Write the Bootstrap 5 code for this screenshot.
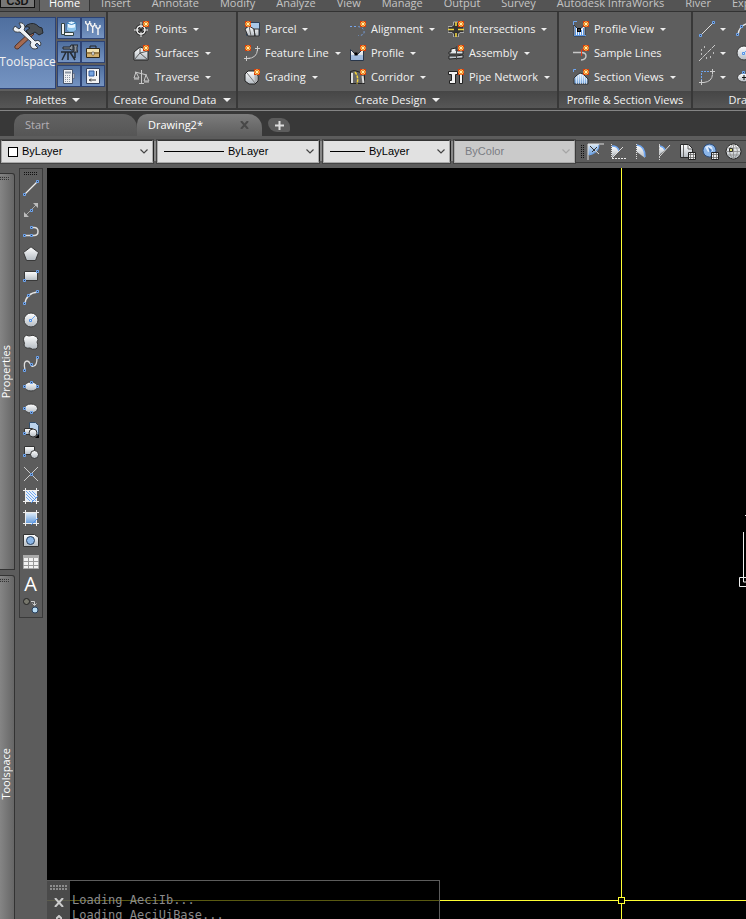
<!DOCTYPE html>
<html lang="en">
<head>
<meta charset="utf-8">
<meta name="viewport" content="width=device-width, initial-scale=1">
<title>Drawing2</title>
<link href="https://cdn.jsdelivr.net/npm/bootstrap@5.3.0/dist/css/bootstrap.min.css" rel="stylesheet">
<style>
:root{--bg:#5c5c5c;--edge:#383838}
body{font-family:"Open Sans","Noto Sans",sans-serif;font-size:11px;line-height:18px;background:var(--bg);color:#f2f2f2}
button{font:inherit;color:inherit;border:0;background:none;padding:0}
svg{display:block;flex:none}
.menu-tabs{height:12px;flex:none;background:#545454;border-bottom:1px solid #333;color:#c4c4c4}
.menu-tabs a{color:inherit;text-decoration:none;white-space:nowrap;flex:none;line-height:16px}
.menu-tabs a.current{color:#fff;background:#666;border:1px solid #333;border-width:0 1px;padding:0 9px;margin-left:4px}
.menu-tabs .names{gap:21px;padding-left:11px}
.app-btn{width:35px;flex:none;height:18px;margin-bottom:3px;background:#777;border:1px solid #111;color:#111;font:bold 11px/20px "Liberation Sans",sans-serif}
.ribbon{height:98px;flex:none;background:var(--edge);gap:2px;padding-bottom:2px}
.panel{background:#5e5e5e;flex:none;overflow:hidden}
.panel-body{height:79px;padding-top:5px}
.panel-title{height:17px;background:linear-gradient(#464646,#565656);white-space:nowrap;display:flex;align-items:center;justify-content:center;gap:6px}
.w-palettes{width:106px}.w-ground{width:128px}.w-design{width:319px}.w-section{width:132px}.w-draw{width:112px}
.cmd{height:24px;display:flex;align-items:center;gap:5px;white-space:nowrap}
.cmd .arrow{margin-left:1px}
.arrow{display:inline-block;border:3px solid transparent;border-top-color:#eee;border-bottom:0}
.arrow.big{border-width:4px 4px 0}
.design-cols{display:grid;grid-template-columns:106px 98px 1fr;padding-left:6px}
.section-items{padding-left:14px}
.ground-items{padding-left:24px}
.draw-grid{display:grid;grid-template-columns:37px 1fr;grid-auto-rows:24px;padding-left:6px}
.draw-grid .cmd{gap:4px}
.blue-btn{background:linear-gradient(#4f6f9f,#7594c2);border:1px solid #2d4374;display:flex;align-items:center;justify-content:center}
.blue-main{width:56px;height:72px;flex-direction:column;border-left:0;justify-content:flex-start;padding-top:4px;gap:3px}
.blue-main span{font-size:12px}
.blue-grid{display:grid;grid-template-columns:24px 24px;grid-auto-rows:22px;row-gap:2px;padding-left:1px}
.file-tabs{height:26px;flex:none;background:var(--edge);border-top:1px solid #848484;padding:3px 0 0 14px}
.file-tab{height:22px;line-height:22px;border-radius:10px 14px 0 0;background:linear-gradient(#626262,#565656);color:#b4b0b6;padding:0 11px;flex:none}
.file-tab.start{width:123px}
.file-tab.current{width:125px;padding-right:13px;color:#fff;background:linear-gradient(#7c7c7c,#5e5e5e)}
.add-tab{width:22px;height:14px;margin:4px 0 0 6px;background:#5c5c5c;border-radius:5px 9px 2px 9px;display:flex;align-items:center;justify-content:center}
.props{height:32px;flex:none;padding:4px 0 5px 1px}
.combo{height:23px;background:#e1e1e1;border:1px solid #aaa;border-top-color:#333;outline:1px solid #444;display:flex;align-items:center;flex:none;padding:0 4px 0 6px;color:#000}
.combo select{flex:1;min-width:0;height:19px;border:0;background:transparent;appearance:none;color:inherit;font:11px/19px "Liberation Sans",sans-serif;padding:0 0 0 4px}
.combo svg{color:#444}
.combo select:disabled{opacity:1;color:#7a7d84}
.combo.off{background:#cacaca}
.combo.off svg{color:#a5a5a5}
.c1{width:152px}.c2{width:162px}.c3{width:127px}.c4{width:121px}
.split-bar{width:4px;height:20px;border:1px solid #222;border-width:0 1px;background:#888;margin-top:1px;flex:none}
.swatch-box{width:10px;height:10px;border:1px solid #000;background:#fff}
.line-sample{height:1px;background:#000;width:60px}
.c3 .line-sample{width:35px}
.icon-bar{height:23px;flex:1 0 168px;border:1px solid #3c3c3c;border-right:0;padding-left:4px;overflow:hidden}
.icon-bar button{width:23px;height:20px;flex:none;display:flex;align-items:center;justify-content:center}
.palettes{width:15px;flex:none;padding-top:5px;gap:5px}
.dock{height:397px;flex:none;background:linear-gradient(90deg,#858585,#666);border:1px solid #333;border-left:0;border-radius:0 3px 0 0;position:relative;display:flex;align-items:center;justify-content:center}
.dock span{writing-mode:vertical-rl;transform:rotate(180deg);line-height:12px;color:#fff;margin-right:3px}
.grip{position:absolute;top:2px;left:0;width:10px;height:4px;background:repeating-linear-gradient(#777 0 1px,transparent 1px 2px),repeating-linear-gradient(90deg,#333 0 1px,#777 1px 2px)}
.toolcol{width:24px;flex:none;border:1px solid #3a3a3a;align-self:flex-start;margin:0 4px}
.toolcol button{width:21px;height:22px;display:flex;align-items:center;justify-content:center}
.toolcol .letter{font-size:20px;line-height:22px;color:#fff}
.toolgrip{height:8px;padding:2px 4px}
.toolgrip i{display:block;height:4px;background:repeating-linear-gradient(var(--bg) 0 1px,transparent 1px 2px),repeating-linear-gradient(90deg,#111 0 1px,var(--bg) 1px 2px)}
.bargrip{width:4px;height:14px;flex:none;background:repeating-linear-gradient(90deg,var(--bg) 0 1px,transparent 1px 2px),repeating-linear-gradient(#111 0 1px,var(--bg) 1px 2px)}
.canvas{background:#000;position:relative;overflow:hidden}
.vline{position:absolute;left:574px;top:0;bottom:0;width:1px;background:#ff3}
.hline{position:absolute;left:0;right:0;bottom:18px;height:1px;background:#ff3}
.node-box{position:absolute;left:571px;bottom:15px;width:7px;height:7px;border:1px solid #ff3;background:#000}
.ucs{position:absolute;left:692px;top:346px}
.console{position:absolute;left:0;bottom:0;width:393px;height:39px;border:1px solid #5c5c5c;border-width:1px 1px 0 0;display:flex;overflow:hidden;background:rgba(0,0,0,.65);font:12px/15px "DejaVu Sans Mono",monospace;color:#8b8b8b}
.console-side{width:23px;flex:none;background:rgba(92,92,92,.8);padding-top:4px}
.console-text{padding:12px 0 0 2px;white-space:pre}
</style>
<script src="https://cdn.jsdelivr.net/npm/bootstrap@5.3.0/dist/js/bootstrap.bundle.min.js"></script>
</head>
<body class="vh-100 d-flex flex-column overflow-hidden">
<svg width="0" height="0" class="position-absolute" aria-hidden="true">
<defs>
<linearGradient id="w" x1="0" y1="0" x2="0" y2="1"><stop offset="0" stop-color="#fff"/><stop offset="1" stop-color="#b4bbc2"/></linearGradient>
<linearGradient id="b" x1="0" y1="0" x2="0" y2="1"><stop offset="0" stop-color="#dbeaf8"/><stop offset="1" stop-color="#6b9fdc"/></linearGradient>
<symbol id="spark" viewBox="0 0 6 6"><path d="M0 0h6v6H0z" fill="#d93a0b"/><path d="M3 0v6M0 3h6M1 1l4 4M5 1L1 5" stroke="#ffd65b"/><path d="M2 2h2v2H2z" fill="#fff2b0"/></symbol>
<symbol id="nd" viewBox="0 0 3 3"><path d="M.5.5h2v2h-2z" fill="#34414f" stroke="#6ea6f2"/></symbol>
<symbol id="chev" viewBox="0 0 8 5"><path d="M.5.5L4 4 7.5.5" fill="none" stroke="currentColor" stroke-width="1.2"/></symbol>
<symbol id="profile" viewBox="0 0 16 16"><path d="M.5 4.500l5 5h2l4-4h2v10H.5z" fill="url(#w)" stroke="#28364a"/><path d="M1 10v5h12v-5z" fill="#8fb4e2" opacity=".7"/><path d="M4.500 7.500h3v3h-3z" fill="#000"/><use href="#spark" x="10" width="6" height="6"/></symbol>
<symbol id="profview" viewBox="0 0 16 16"><path d="M.5 4V.5H4" fill="none" stroke="#6ea6f2"/><path d="M1 4l4 4h2l5-4v11H1z" fill="#f2f6fa" stroke="#28364a"/><path d="M2.500 6v9M4.500 9v6M6.500 11v4M8.500 9v6M10.500 7v8" stroke="#5c97e2"/><path d="M1 14.500h12" stroke="#5c97e2"/><path d="M4 7h4v4H4z" fill="#000"/><path d="M5.500 8.500h1v1h-1z" fill="#fff"/><use href="#spark" x="10" width="6" height="6"/></symbol>
<symbol id="arcs" viewBox="0 0 16 16"><path d="M2 14Q3 3 15 2" fill="none" stroke="#e6e6e6" stroke-width="1.400"/><use href="#nd" x="0" y="12" width="3" height="3"/><use href="#nd" x="4" y="4" width="3" height="3"/><use href="#nd" x="13" y="0" width="3" height="3"/></symbol>
<symbol id="circ" viewBox="0 0 16 16"><circle cx="8" cy="8" r="7" fill="url(#w)" stroke="#3c3c3c"/><path d="M8 8l4-4" stroke="#6ea6f2"/><path d="M6.500 7.500h2v2h-2z" fill="#dbeaf8" stroke="#4f90e8"/></symbol>
<symbol id="ell" viewBox="0 0 16 16"><ellipse cx="8" cy="8.500" rx="6.500" ry="4.500" fill="url(#w)" stroke="#3c3c3c"/></symbol>
<symbol id="grid" viewBox="0 0 8 8"><path d="M.5.5h7v7h-7z" fill="#eee" stroke="#222"/><path d="M2.500 1v6M5.500 1v6M1 2.500h6M1 5.500h6" stroke="#666" stroke-width=".8"/></symbol>
</defs></svg>

<nav class="menu-tabs d-flex align-items-end overflow-hidden" aria-label="Ribbon tabs">
  <button class="app-btn">C3D</button>
  <a class="current" href="#">Home</a>
  <div class="names d-flex">
    <a href="#">Insert</a><a href="#">Annotate</a><a href="#">Modify</a><a href="#">Analyze</a><a href="#">View</a><a href="#">Manage</a><a href="#">Output</a><a href="#">Survey</a><a href="#">Autodesk InfraWorks</a><a href="#">River</a><a href="#">Express Tools</a>
  </div>
</nav>

<div class="ribbon d-flex overflow-hidden">
  <section class="panel w-palettes">
    <div class="panel-body d-flex">
      <button class="blue-btn blue-main">
        <svg width="32" height="28" viewBox="0 0 32 28"><path d="M3 24L19 9l3 3L6 27q-4 0-3-3z" fill="#a46a51" stroke="#513127"/><path d="M15 3q7-4 12 2l3 1 1 5-4 2-4-3-5 3-4-4 4-3q-2-2-5-1z" fill="#4a5056" stroke="#24282d"/><path d="M3 4l4 3 2-2-2-4q5-1 6 4l-1 3 11 11q5-2 6 3l-1 2-3-3-2 2 3 3q-6 3-8-3l1-3L8 10q-6 1-7-3z" fill="#eef1f4" stroke="#30343a" stroke-width=".9"/></svg>
        <span>Toolspace</span>
      </button>
      <div class="blue-grid">
        <button class="blue-btn" aria-label="Panorama"><svg width="16" height="16" viewBox="0 0 16 16"><path d="M.5 3.500h3v11h-3zM3.500 12.500h9v3h-9z" fill="#f5f5f5" stroke="#344"/><path d="M6 3q4.500-4 9 0v7q-4.500 3-9 0z" fill="#e4f4ff" stroke="#3874aa"/><path d="M6 7v3q4.500 3 9 0V7q-4.500 2-9 0z" fill="#8cc4ec"/><path d="M6 3q4.500 3 9 0" fill="none" stroke="#3882c0"/></svg></button>
        <button class="blue-btn" aria-label="Tool palettes"><svg width="16" height="16" viewBox="0 0 16 16"><path d="M.7 1v2l2 2 2-2V1M2.700 5v6M5.700 3v2l2 2 2-2V3M7.700 7v6M11 5v2l2 2 2-2V5M13 9v6" fill="none" stroke="#f2f2f2" stroke-width="1.500"/></svg></button>
        <button class="blue-btn" aria-label="Survey"><svg width="17" height="17" viewBox="0 0 17 17"><path d="M2 3h7l1-2h2v5h-2l-1-1H2zM12 1h5l-1 2v4h1v1h-5V7h1V3z" fill="#8a929a" stroke="#20252b"/><path d="M0 8h12M5 8L1 16M7 8v8M9 8l5 8M14 8v6" stroke="#252b33" stroke-width="1.500"/></svg></button>
        <button class="blue-btn" aria-label="Toolbox"><svg width="16" height="14" viewBox="0 0 16 14"><path d="M5 3V1h6v2" fill="none" stroke="#222"/><path d="M1.500 3.500h13v9h-13z" fill="#d1b06e" stroke="#302819"/><path d="M2 4h12v3H2z" fill="#f2e2b1"/><path d="M1 8h14" stroke="#675029"/><path d="M7 7h2v3H7z" fill="#fff" stroke="#333" stroke-width=".5"/></svg></button>
        <button class="blue-btn" aria-label="Calculator"><svg width="12" height="17" viewBox="0 0 12 17"><path d="M.5 1.500h9v14h-9z" fill="#eef0f2" stroke="#46536a"/><path d="M2 4.500h6" stroke="#8b96a4" stroke-width="2"/><path d="M2 7.500h6M2 9.500h6M2 11.500h6M2 13.500h6" stroke="#8b96a4" stroke-dasharray="1 1"/><path d="M10 5.500h1.500v5H10z" fill="#edf0f3" stroke="#46536a" stroke-width=".6"/></svg></button>
        <button class="blue-btn" aria-label="Properties"><svg width="14" height="16" viewBox="0 0 14 16"><path d="M.5.500h13v15H.5z" fill="#f4f4f4" stroke="#33405c"/><path d="M3 3h5v5H3z" fill="#76a5e1" stroke="#335a9c"/><path d="M10.500 3v5" stroke="#333"/><path d="M3 12h7M5 10.500L3.500 12 5 13.500" fill="none" stroke="#333"/></svg></button>
      </div>
    </div>
    <div class="panel-title">Palettes <i class="arrow big"></i></div>
  </section>

  <section class="panel w-ground">
    <div class="panel-body ground-items">
      <button class="cmd"><svg width="18" height="16" viewBox="0 0 18 16"><circle cx="9" cy="9" r="4" fill="none" stroke="#222" stroke-width="3.400"/><path d="M9 1v6M9 11v5M2 9h5M11 9h5" stroke="#eee"/><circle cx="9" cy="9" r="4" fill="none" stroke="#eee" stroke-width="1.600"/><circle cx="9" cy="9" r="1.500" fill="#222"/><use href="#spark" x="11" width="6" height="6"/></svg>Points <i class="arrow"></i></button>
      <button class="cmd"><svg width="18" height="16" viewBox="0 0 18 16"><path d="M2 7l6-5 8 3v10H2z" fill="url(#w)" stroke="#222"/><path d="M2 15l6-7 8 7M8 2v6l8-2" fill="none" stroke="#555"/><use href="#spark" x="11" width="6" height="6"/></svg>Surfaces <i class="arrow"></i></button>
      <button class="cmd"><svg width="18" height="16" viewBox="0 0 18 16"><path d="M9.500 1v13M7 14.500h5M3 3l12 3M4 3L2 9h5L4 3M14 6l-2 6h5l-3-6M2 10h5M12 13h5" fill="none" stroke="#c9c9c9"/></svg>Traverse <i class="arrow"></i></button>
    </div>
    <div class="panel-title">Create Ground Data <i class="arrow big"></i></div>
  </section>

  <section class="panel w-design">
    <div class="panel-body design-cols">
      <div>
        <button class="cmd"><svg width="16" height="16" viewBox="0 0 16 16"><path d="M5.500 1.500h10v13h-13v-9z" fill="#a9c8e8" stroke="#2d4058"/><path d="M1 8l4-3 5 3 1 7H4zM10 8h5v7h-4z" fill="url(#w)" stroke="#333"/><path d="M5 5l2 10" stroke="#666"/><use href="#spark" x="1" width="6" height="6"/></svg>Parcel <i class="arrow"></i></button>
        <button class="cmd"><svg width="16" height="16" viewBox="0 0 16 16"><path d="M0 13.500h6M2.500 11v5M11 3.500h5M13.500 1v5M3 13.500q10 0 10.500-9" fill="none" stroke="#ccc"/><use href="#spark" x="1" width="6" height="6"/></svg>Feature Line <i class="arrow"></i></button>
        <button class="cmd"><svg width="16" height="16" viewBox="0 0 16 16"><path d="M1 5l3-3h6l4 5v5l-3 3H5l-4-3z" fill="url(#w)" stroke="#222"/><path d="M3 4l8 10" stroke="#777"/><path d="M11 14l3-3V7l-4-4z" fill="#999" opacity=".6"/><use href="#spark" x="10" width="6" height="6"/></svg>Grading <i class="arrow"></i></button>
      </div>
      <div>
        <button class="cmd"><svg width="16" height="16" viewBox="0 0 16 16"><path d="M0 5.500h6q7 0 8 4.500t-6 4.500" fill="none" stroke="#77a6ed" stroke-dasharray="2 2"/><use href="#spark" x="10" width="6" height="6"/></svg>Alignment <i class="arrow"></i></button>
        <button class="cmd"><svg width="16" height="16"><use href="#profile"/></svg>Profile <i class="arrow"></i></button>
        <button class="cmd"><svg width="16" height="16" viewBox="0 0 16 16"><path d="M.5 2.500l4-1q6 1 10 5v8H.5z" fill="#666" stroke="#222"/><path d="M2 4v10M12.500 7l1 7" stroke="#ddd" stroke-width="2"/><path d="M5 3q4 5 2 12" fill="none" stroke="#f3d238" stroke-width="1.500" stroke-dasharray="3 1"/><use href="#spark" x="10" width="6" height="6"/></svg>Corridor <i class="arrow"></i></button>
      </div>
      <div>
        <button class="cmd"><svg width="16" height="16" viewBox="0 0 16 16"><path d="M5.500 1v3l-1.500 1.500H0v6h4L5.500 13v3h5v-3l1.500-1.500h4v-6h-4L10.500 4V1z" fill="#333" stroke="#aaa"/><path d="M0 8.500h6M10 8.500h6M8 1v4M8 12v4" stroke="#f0d541" stroke-width="1.600"/><use href="#spark" x="10" width="6" height="6"/></svg>Intersections <i class="arrow"></i></button>
        <button class="cmd"><svg width="16" height="16" viewBox="0 0 16 16"><path d="M3 4l5-1v3h7v3H1V7h2zM1 11h7l7-1v3l-14 1z" fill="url(#w)" stroke="#222"/><path d="M8.500 1v14" stroke="#444"/><use href="#spark" x="10" width="6" height="6"/></svg>Assembly <i class="arrow"></i></button>
        <button class="cmd"><svg width="16" height="16" viewBox="0 0 16 16"><path d="M.5 2.500h9v3h-2v9h-6v-3h2v-6h-3zM11.500 5.500h3v9h-3z" fill="#f2f2f2" stroke="#222"/><use href="#spark" x="10" width="6" height="6"/></svg>Pipe Network <i class="arrow"></i></button>
      </div>
    </div>
    <div class="panel-title">Create Design <i class="arrow big"></i></div>
  </section>

  <section class="panel w-section">
    <div class="panel-body section-items">
      <button class="cmd"><svg width="16" height="16"><use href="#profview"/></svg>Profile View <i class="arrow"></i></button>
      <button class="cmd"><svg width="16" height="16" viewBox="0 0 16 16"><path d="M0 7.500h8q5 0 5 3.500t-5 4" fill="none" stroke="#c7c7c7" stroke-width="1.400"/><path d="M8.500 11V5l2-2" fill="none" stroke="#e33c1a"/><use href="#spark" x="10" width="6" height="6"/></svg>Sample Lines</button>
      <button class="cmd"><svg width="16" height="16" viewBox="0 0 16 16"><path d="M.5 3V.5H3" fill="none" stroke="#6ea6f2"/><path d="M1 15V9l3-3 3-2 3 1 3 3 2 2v5z" fill="url(#b)" stroke="#333"/><path d="M3.500 8v7M5.500 6v9M7.500 5v10M9.500 6v9M11.500 7v8M13.500 9v6" stroke="#fff" opacity=".6"/><use href="#spark" x="10" width="6" height="6"/></svg>Section Views <i class="arrow"></i></button>
    </div>
    <div class="panel-title">Profile &amp; Section Views</div>
  </section>

  <section class="panel w-draw">
    <div class="panel-body draw-grid">
      <button class="cmd" aria-label="Line"><svg width="16" height="16" viewBox="0 0 16 16"><path d="M2 14L14 2" stroke="#ddd"/><use href="#nd" y="13" width="3" height="3"/><use href="#nd" x="13" width="3" height="3"/></svg><i class="arrow"></i></button>
      <button class="cmd" aria-label="Arc"><svg width="16" height="16"><use href="#arcs"/></svg></button>
      <button class="cmd" aria-label="Divide"><svg width="16" height="16" viewBox="0 0 16 16"><path d="M0 16L16 0" stroke="#ccc" stroke-dasharray="5 1"/><path d="M2 5h1M5 2h1M2 9h1M7 13h1M11 12h1M14 8h1" stroke="#ddd" stroke-width="1.500"/></svg><i class="arrow"></i></button>
      <button class="cmd" aria-label="Circle"><svg width="16" height="16"><use href="#circ"/></svg></button>
      <button class="cmd" aria-label="Curve"><svg width="16" height="16" viewBox="0 0 16 16"><path d="M2.500 12V2.500H11" fill="none" stroke="#6ea6f2" stroke-dasharray="2 1"/><path d="M0 13.500h5M2.500 11v5M11 2.500h5M13.500 0v5M5 13.500q8-1 8.500-8" fill="none" stroke="#ccc"/></svg><i class="arrow"></i></button>
      <button class="cmd" aria-label="Ellipse"><svg width="16" height="16" viewBox="0 0 16 16"><use href="#ell"/><path d="M6 8.500h4M8 6v5" stroke="#111"/><use href="#nd" x="6" y="2" width="3" height="3"/></svg></button>
    </div>
    <div class="panel-title">Draw <i class="arrow big"></i></div>
  </section>
</div>

<div class="file-tabs d-flex align-items-start">
  <button class="file-tab start text-start">Start</button>
  <button class="file-tab current d-flex align-items-center justify-content-between"><span>Drawing2*</span><svg width="9" height="8" viewBox="0 0 9 8"><path d="M1 0l7 8M8 0L1 8" stroke="#484848" stroke-width="2"/></svg></button>
  <button class="add-tab" aria-label="New drawing"><svg width="9" height="9" viewBox="0 0 9 9"><path d="M4.500 0v9M0 4.500h9" stroke="#ddd" stroke-width="2"/></svg></button>
</div>

<div class="props d-flex">
  <div class="combo c1"><i class="swatch-box"></i><select aria-label="Color"><option>ByLayer</option></select><svg width="8" height="5"><use href="#chev"/></svg></div>
  <i class="split-bar"></i>
  <div class="combo c2"><i class="line-sample"></i><select aria-label="Linetype"><option>ByLayer</option></select><svg width="8" height="5"><use href="#chev"/></svg></div>
  <i class="split-bar"></i>
  <div class="combo c3"><i class="line-sample"></i><select aria-label="Lineweight"><option>ByLayer</option></select><svg width="8" height="5"><use href="#chev"/></svg></div>
  <i class="split-bar"></i>
  <div class="combo c4 off"><select disabled aria-label="Plot style"><option>ByColor</option></select><svg width="8" height="5"><use href="#chev"/></svg></div>
  <div class="icon-bar d-flex align-items-center">
    <i class="bargrip"></i>
    <button aria-label="Corner"><svg width="17" height="17" viewBox="0 0 17 17"><path d="M1 1h11q0 9-11 11z" fill="url(#b)"/><path d="M1 17V1h16" fill="none" stroke="#ddd"/><path d="M12 2q0 8-10 10" fill="none" stroke="#6ea6f2"/><path d="M2 2l10 9" stroke="#ddd"/><path d="M3 3l5 5M10 4L5 9" stroke="#333"/></svg></button>
    <button aria-label="Angle"><svg width="17" height="17" viewBox="0 0 17 17"><path d="M2 3q6 0 7 5l-7 6z" fill="url(#w)"/><path d="M2 3q6 0 7 5" fill="none" stroke="#6ea6f2" stroke-width="1.500"/><path d="M1.500 1v13" stroke="#ddd" stroke-dasharray="1 1"/><path d="M2 15L13 4" stroke="#ddd"/><path d="M2 15.500h14" stroke="#eee" stroke-dasharray="2 1"/></svg></button>
    <button aria-label="Segment"><svg width="17" height="17" viewBox="0 0 17 17"><path d="M4 2q8 1 8 13L4 9z" fill="url(#w)"/><path d="M4 2q8 1 8 12" fill="none" stroke="#6ea6f2" stroke-width="1.500"/><path d="M3.500 1v15" stroke="#ddd" stroke-dasharray="1 1"/></svg></button>
    <button aria-label="Deflection"><svg width="17" height="17" viewBox="0 0 17 17"><path d="M3 3q5 0 6 4l-6 5z" fill="url(#w)"/><path d="M4 3q4 1 5 4" fill="none" stroke="#6ea6f2" stroke-width="1.500"/><path d="M3.500 1v16" stroke="#ccc" stroke-dasharray="2 1"/><path d="M4 13L14 2" stroke="#ddd"/></svg></button>
    <button aria-label="Sheet table"><svg width="17" height="17" viewBox="0 0 17 17"><path d="M1.500 1.500h8l4 4v9h-12z" fill="url(#w)" stroke="#292929"/><path d="M4.500 2v12M9 2v4h4" fill="none" stroke="#666"/><use href="#grid" x="9" y="9" width="8" height="8"/></svg></button>
    <button aria-label="Globe table"><svg width="17" height="17" viewBox="0 0 17 17"><circle cx="7.500" cy="7.500" r="6.500" fill="#8bb6ea" stroke="#2d4d7c"/><path d="M3 4q4-3 7 0l1 4-5 1z" fill="#dceafc"/><path d="M6 4l4 3-2 3z" fill="#4577b8"/><use href="#grid" x="9" y="9" width="8" height="8"/></svg></button>
    <button aria-label="Globe"><svg width="17" height="17" viewBox="0 0 17 17"><circle cx="8.500" cy="8.500" r="7.500" fill="url(#w)" stroke="#222"/><path d="M8.500 1v15M1 8.500h15M2 5h13M2 12h13M8 1q-7 7 0 15M9 1q7 7 0 15" fill="none" stroke="#888" stroke-width=".8"/><path d="M4.500 5.500h3v3h-3z" fill="#dde074" stroke="#333"/></svg></button>
  </div>
</div>

<main class="d-flex flex-grow-1 overflow-hidden">
  <div class="palettes d-flex flex-column">
    <div class="dock"><i class="grip"></i><span>Properties</span></div>
    <div class="dock"><i class="grip"></i><span>Toolspace</span></div>
  </div>
  <div class="toolcol" role="toolbar" aria-label="Draw">
    <div class="toolgrip"><i></i></div>
    <button aria-label="Line"><svg width="16" height="16" viewBox="0 0 16 16"><path d="M2 14L14 2" stroke="#eee" stroke-width="1.200"/><use href="#nd" y="13" width="3" height="3"/><use href="#nd" x="13" width="3" height="3"/></svg></button>
    <button aria-label="Construction line"><svg width="16" height="16" viewBox="0 0 16 16"><path d="M3 13L13 3" stroke="#aaa"/><path d="M10 1h5v5zM1 10v5h5z" fill="#bbb"/><use href="#nd" x="7" y="7" width="3" height="3"/></svg></button>
    <button aria-label="Polyline"><svg width="16" height="16" viewBox="0 0 16 16"><path d="M2 11.500h9q4 0 4-4t-4-4H8" fill="none" stroke="#ddd" stroke-width="1.500"/><use href="#nd" y="10" width="3" height="3"/><use href="#nd" x="7" y="10" width="3" height="3"/><use href="#nd" x="7" y="2" width="3" height="3"/></svg></button>
    <button aria-label="Polygon"><svg width="16" height="16" viewBox="0 0 16 16"><path d="M8 .8L15.500 6.500l-3 8h-9l-3-8z" fill="url(#w)" stroke="#393939"/></svg></button>
    <button aria-label="Rectangle"><svg width="16" height="16" viewBox="0 0 16 16"><path d="M1.500 3.500h13v9h-13z" fill="url(#w)" stroke="#393939"/><use href="#nd" y="11" width="3" height="3"/><use href="#nd" x="13" y="2" width="3" height="3"/></svg></button>
    <button aria-label="Arc"><svg width="16" height="16"><use href="#arcs"/></svg></button>
    <button aria-label="Circle"><svg width="16" height="16"><use href="#circ"/></svg></button>
    <button aria-label="Revision cloud"><svg width="16" height="16" viewBox="0 0 16 16"><path d="M1 3q2-3 5-1 4-2 8 1 2 3 0 5 2 5-1 7-4 1-6-1-5 1-6-3 1-2 0-3Q0 5 1 3z" fill="url(#w)" stroke="#393939"/></svg></button>
    <button aria-label="Spline"><svg width="16" height="16" viewBox="0 0 16 16"><path d="M2 14Q0 5 4 5c4 0 3 7 7 5q3-1 3-8" fill="none" stroke="#ddd" stroke-width="1.300"/><use href="#nd" y="13" width="3" height="3"/><use href="#nd" x="7" y="7" width="3" height="3"/><use href="#nd" x="13" width="3" height="3"/></svg></button>
    <button aria-label="Ellipse"><svg width="16" height="16" viewBox="0 0 16 16"><use href="#ell"/><use href="#nd" x="7" y="3" width="3" height="3"/><use href="#nd" y="7" width="3" height="3"/><use href="#nd" x="13" y="7" width="3" height="3"/></svg></button>
    <button aria-label="Ellipse arc"><svg width="16" height="16" viewBox="0 0 16 16"><use href="#ell"/><use href="#nd" y="7" width="3" height="3"/><use href="#nd" x="7" y="11" width="3" height="3"/></svg></button>
    <button aria-label="Insert block"><svg width="16" height="16" viewBox="0 0 16 16"><path d="M6.500.500h6l3 3v9h-9z" fill="#bcd4ed" stroke="#35506d"/><path d="M1.500 6.500h8v6h-8z" fill="url(#w)" stroke="#333"/><circle cx="10" cy="11" r="4" fill="url(#w)" stroke="#333"/><use href="#nd" y="10" width="3" height="3"/><path d="M16 12v4h-4z" fill="#000"/></svg></button>
    <button aria-label="Make block"><svg width="16" height="16" viewBox="0 0 16 16"><path d="M1.500 2.500h10v8h-10z" fill="url(#w)" stroke="#333"/><circle cx="11.500" cy="10.500" r="4" fill="url(#w)" stroke="#333"/><use href="#nd" y="10" width="3" height="3"/></svg></button>
    <button aria-label="Point"><svg width="16" height="16" viewBox="0 0 16 16"><path d="M1 15L15 1M1 1l14 14" stroke="#ccc"/><use href="#nd" x="7" y="7" width="3" height="3"/></svg></button>
    <button aria-label="Hatch"><svg width="16" height="16" viewBox="0 0 16 16"><path d="M3 3h10v10H3z" fill="#e6eef6"/><path d="M3 6l7 7M3 3l10 10M6 3l7 7M9 3l4 4M3 9l4 4" stroke="#6ea6f2"/><path d="M2.500 0v16M13.500 0v16M0 2.500h16M0 13.500h16" stroke="#eee"/><path d="M15 8l-7 7" stroke="#4f90e8"/></svg></button>
    <button aria-label="Gradient"><svg width="16" height="16" viewBox="0 0 16 16"><path d="M3 3h10v10H3z" fill="url(#b)"/><path d="M2.500 0v16M13.500 0v16M0 2.500h16M0 13.500h16" stroke="#eee"/><path d="M15 8l-7 7" stroke="#4f90e8"/></svg></button>
    <button aria-label="Region"><svg width="16" height="16" viewBox="0 0 16 16"><path d="M.5 2.500h11l4 3v9H.5z" fill="url(#w)" stroke="#333"/><circle cx="7.500" cy="8.500" r="4" fill="#8bb6e7" stroke="#27405e"/></svg></button>
    <button aria-label="Table"><svg width="16" height="16" viewBox="0 0 16 16"><path d="M.5 1.500h15v13H.5z" fill="#f2f2f2" stroke="#aaa"/><path d="M0 1h16v3H0z" fill="#aaa"/><path d="M5.500 4v11M10.500 4v11M0 7.500h16M0 11.500h16" stroke="#999"/></svg></button>
    <button class="letter" aria-label="Multiline text">A</button>
    <button aria-label="Add selected"><svg width="16" height="16" viewBox="0 0 16 16"><circle cx="3.500" cy="3.500" r="3" fill="#77776c" stroke="#222"/><circle cx="12" cy="12" r="3" fill="#b8dcf4" stroke="#27405e"/><path d="M8 3.500h3.500V7M9.500 5.500l2 2 2-2" fill="none" stroke="#ccc"/></svg></button>
  </div>
  <div class="canvas flex-grow-1">
    <i class="vline"></i><i class="hline"></i><i class="node-box"></i>
    <svg class="ucs" width="40" height="75" viewBox="0 0 40 75"><path d="M4.500 18v50H40M.5 63.500h9v9h-9zM6 1.500h10" fill="none" stroke="#eee"/></svg>
    <div class="console">
      <div class="console-side d-flex flex-column align-items-center">
        <svg width="18" height="5" viewBox="0 0 18 5"><path d="M0 1h18M0 4h18" stroke="#8d8d8d" stroke-width="2" stroke-dasharray="2 1"/></svg>
        <button class="mt-2" aria-label="Close"><svg width="10" height="9" viewBox="0 0 10 9"><path d="M1 0l8 9M9 0L1 9" stroke="#ccc" stroke-width="2"/></svg></button>
        <svg class="mt-2" width="6" height="6" viewBox="0 0 6 6"><path d="M0 4l3-3 3 3" fill="none" stroke="#ccc" stroke-width="2"/></svg>
      </div>
      <div class="console-text">Loading AeciIb...
Loading AeciUiBase...</div>
    </div>
  </div>
</main>
</body>
</html>
